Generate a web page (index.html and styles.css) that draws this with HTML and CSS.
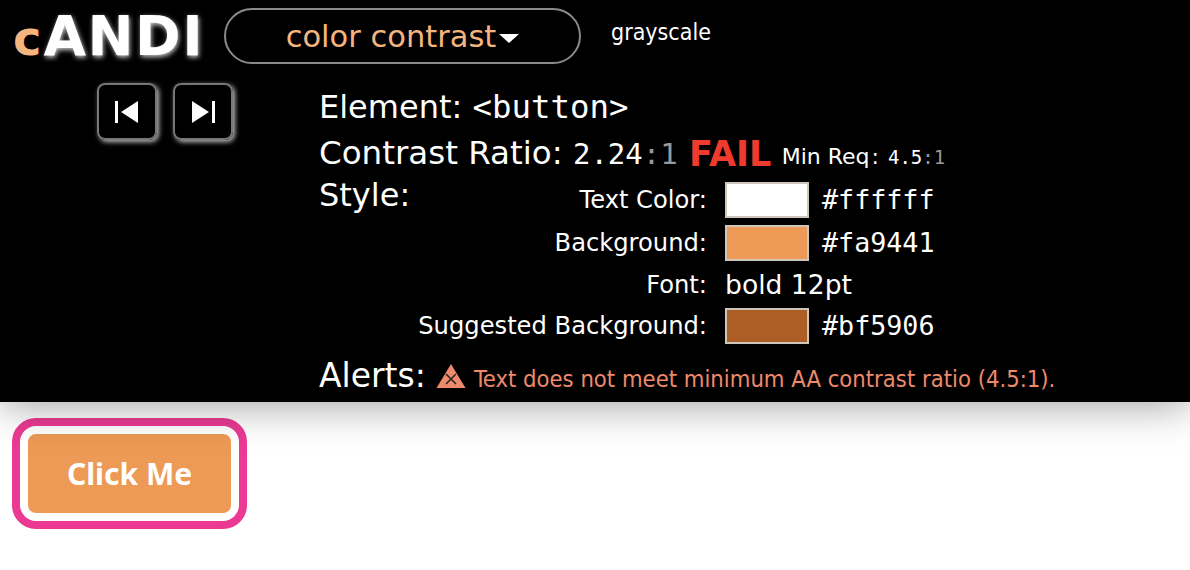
FILE: index.html
```html
<!DOCTYPE html>
<html lang="en">
<head>
  <meta charset="UTF-8" />
  <title>cANDI color contrast</title>
  <link rel="stylesheet" href="styles.css">
</head>
<body>
  <div class="bar">
    <div class="top">
      <div class="logo"><span class="logo-c">c</span>ANDI</div>
      <div class="module">color contrast<span class="caret"></span></div>
      <div class="gray">grayscale</div>
    </div>
    <div class="main">
      <div class="nav">
        <div class="nav-btn">
          <svg width="24" height="24" viewBox="0 0 24 24"><rect x="0" y="1" width="3" height="22" fill="#fff"/><polygon points="23,1 23,23 6,12" fill="#fff"/></svg>
        </div>
        <div class="nav-btn">
          <svg width="24" height="24" viewBox="0 0 24 24"><polygon points="1,1 1,23 18,12" fill="#fff"/><rect x="21" y="1" width="3" height="22" fill="#fff"/></svg>
        </div>
      </div>
      <div class="info">
        <div class="element">Element: <span class="mono">&lt;button&gt;</span></div>
        <div class="ratio">Contrast Ratio: <span class="mono">2.24<span class="dim">:1</span></span> <span class="fail">FAIL</span> <span class="min">Min Req<span class="min-colon">:</span> <span class="mono small">4.5<span class="dim">:1</span></span></span></div>
        <div class="style-row">
          <div class="style-title">Style:</div>
          <div class="style-grid">
            <div class="label">Text Color:</div>
            <div class="value"><span class="swatch white"></span><span class="mono">#ffffff</span></div>
            <div class="label">Background:</div>
            <div class="value"><span class="swatch orange"></span><span class="mono">#fa9441</span></div>
            <div class="label">Font:</div>
            <div class="value font-value">bold 12pt</div>
            <div class="label">Suggested Background:</div>
            <div class="value"><span class="swatch brown"></span><span class="mono">#bf5906</span></div>
          </div>
        </div>
        <div class="alerts">
          <span class="alerts-title">Alerts:</span>
          <svg class="warn" width="30" height="26" viewBox="0 0 30 26"><polygon points="15,1 29.5,25 0.5,25" fill="#ee8a6c"/><path d="M10 11 L20 21 M20 11 L10 21" stroke="#222" stroke-width="1.5"/></svg>
          <span class="alert-text">Text does not meet minimum AA contrast ratio (4.5:1).</span>
        </div>
      </div>
    </div>
  </div>
  <div class="page">
    <div class="focus">
      <button class="click">Click Me</button>
    </div>
  </div>
</body>
</html>
```

FILE: styles.css
```css
body {
  margin: 0;
  background-color: #fff;
  font-family: "DejaVu Sans", sans-serif;
  overflow: hidden;
}
.bar {
  background-color: #000;
  color: #fff;
  height: 402px;
  box-shadow: 0 2px 40px rgba(0,0,0,0.4);
  position: relative;
}
.top {
  display: flex;
  align-items: flex-start;
  padding: 8px 0 0 13px;
  height: 75px;
  box-sizing: border-box;
}
.logo {
  font-size: 55px;
  font-weight: bold;
  line-height: 56px;
  width: 211px;
  letter-spacing: 1.5px;
  text-shadow: 1px 2px 5px #ccc;
  white-space: nowrap;
}
.logo-c {
  color: #f4b57f;
  font-size: 48px;
  letter-spacing: 2px;
  text-shadow: none;
}
.module {
  width: 357px;
  height: 56px;
  box-sizing: border-box;
  border: 2px solid #8a8a8a;
  border-radius: 28px;
  color: #f4b57f;
  font-size: 30.5px;
  line-height: 54px;
  text-align: center;
}
.caret {
  display: inline-block;
  margin-left: 3px;
  vertical-align: middle;
  border-left: 10px solid transparent;
  border-right: 10px solid transparent;
  border-top: 9px solid #fff;
}
.gray {
  font-family: "DejaVu Sans Condensed", "DejaVu Sans", sans-serif;
  font-stretch: condensed;
  font-size: 23px;
  margin: 9px 0 0 30px;
  line-height: 30px;
}
.main {
  display: flex;
}
.nav {
  display: flex;
  gap: 16px;
  width: 319px;
  padding-left: 97px;
  box-sizing: border-box;
  flex-shrink: 0;
  margin-top: 8px;
}
.nav-btn {
  width: 60px;
  height: 57px;
  box-sizing: border-box;
  border: 2px solid #777;
  border-radius: 8px;
  box-shadow: 2px 2px 5px #bbb;
  display: flex;
  align-items: center;
  justify-content: center;
}
.info {
  font-size: 32px;
  line-height: 36px;
  white-space: nowrap;
}
.mono {
  font-family: "DejaVu Sans Mono", monospace;
}
.dim {
  color: #999;
}
.element {
  margin-top: 14px;
}
.element .mono {
  font-size: 32.4px;
}
.ratio {
  font-size: 32.5px;
  height: 36px;
  margin-top: 10px;
}
.ratio .mono {
  font-size: 29px;
}
.fail {
  color: #ef3b2d;
  font-weight: bold;
  font-size: 35px;
  margin-left: 1px;
  vertical-align: -2px;
}
.min {
  font-size: 22px;
}
.min-colon {
  margin: 0 2px;
}
.ratio .small {
  font-size: 19px;
}
.style-row {
  display: flex;
  margin-top: 6px;
}
.style-title {
  width: 0;
}
.style-grid {
  display: grid;
  grid-template-columns: 388px auto;
  grid-template-rows: 40px 40px 37px 40px;
  column-gap: 18px;
  row-gap: 3px;
  font-size: 24.2px;
  line-height: 30px;
  margin-top: 3px;
  align-items: center;
}
.label {
  text-align: right;
}
.value {
  display: flex;
  align-items: center;
  gap: 13px;
}
.font-value {
  font-size: 26.6px;
}
.value .mono {
  font-size: 26.7px;
}
.swatch {
  width: 84px;
  height: 36px;
  box-sizing: border-box;
  border: 2px solid #cfc6bb;
}
.white { background-color: #fff; }
.orange { background-color: #ec9a55; }
.brown { background-color: #ad5e24; }
.alerts {
  display: flex;
  align-items: center;
  margin-top: 9px;
}
.alerts-title {
  font-size: 33px;
}
.warn {
  margin: 0 8px 0 10px;
}
.alert-text {
  color: #ee8a6c;
  font-family: "DejaVu Sans Condensed", "DejaVu Sans", sans-serif;
  font-stretch: condensed;
  font-size: 23.6px;
  margin-top: 6px;
}
.page {
  padding: 16px 0 0 12px;
}
.focus {
  display: inline-block;
  border: 8px solid #ea3a93;
  border-radius: 24px;
  padding: 8px;
}
.click {
  display: block;
  width: 203px;
  height: 79px;
  border: none;
  border-radius: 8px;
  background-color: #ec9a55;
  color: #fff;
  font-family: "Noto Sans", sans-serif;
  font-weight: bold;
  font-size: 30px;
}
```
